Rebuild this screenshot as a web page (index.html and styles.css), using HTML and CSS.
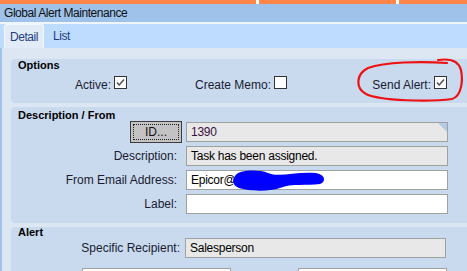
FILE: index.html
```html
<!DOCTYPE html>
<html lang="en">
<head>
  <meta charset="UTF-8" />
  <title>Global Alert Maintenance</title>
  <link rel="stylesheet" href="styles.css">
</head>
<body>
  <div class="topbar">
    <span class="seg seg-a"></span>
    <span class="seg seg-b"></span>
    <span class="seg seg-c"></span>
  </div>

  <div class="titlebar">Global Alert Maintenance</div>

  <div class="tabs">
    <span class="tab active">Detail</span>
    <span class="tab">List</span>
  </div>

  <div class="content">
    <section class="panel options">
      <div class="panel-title">Options</div>
      <div class="check-row">
        <div class="check first">Active:<svg class="box" width="13" height="13" viewBox="0 0 13 13"><rect x="0.5" y="0.5" width="12" height="12" fill="#fff" stroke="#333"/><path d="M3 6.5 L5.2 9 L10 3.5" fill="none" stroke="#4a4a4a" stroke-width="1.4"/></svg></div>
        <div class="check">Create Memo:<svg class="box" width="13" height="13" viewBox="0 0 13 13"><rect x="0.5" y="0.5" width="12" height="12" fill="#fff" stroke="#333"/></svg></div>
        <div class="check">Send Alert:<svg class="box" width="13" height="13" viewBox="0 0 13 13"><rect x="0.5" y="0.5" width="12" height="12" fill="#fff" stroke="#333"/><path d="M3 6.5 L5.2 9 L10 3.5" fill="none" stroke="#4a4a4a" stroke-width="1.4"/></svg></div>
      </div>
    </section>

    <section class="panel desc">
      <div class="panel-title">Description / From</div>
      <div class="form-row first">
        <div class="id-cell"><button class="id-btn"><span>ID...</span></button></div>
        <div class="field readonly keyed">1390</div>
      </div>
      <div class="form-row">
        <div class="label">Description:</div>
        <div class="field readonly">Task has been assigned.</div>
      </div>
      <div class="form-row">
        <div class="label">From Email Address:</div>
        <div class="field">Epicor@</div>
      </div>
      <div class="form-row">
        <div class="label">Label:</div>
        <div class="field"></div>
      </div>
    </section>

    <section class="panel alert">
      <div class="panel-title">Alert</div>
      <div class="form-row first">
        <div class="label narrow">Specific Recipient:</div>
        <div class="field readonly short">Salesperson</div>
      </div>
      <div class="pair">
        <div class="blank left"></div>
        <div class="blank right"></div>
      </div>
    </section>
  </div>

  <svg class="marks" width="467" height="271" viewBox="0 0 467 271">
    <path d="M235 176 C238 170 258 169 268 173 C280 178 296 171 316 173 C326 175 326 182 320 184 C306 186 292 183 280 188 C268 192 248 191 239 188 C232 185 232 180 235 176 Z" fill="#0000ff"/>
    <path d="M447 63 C420 61 385 62 368 68 C356 74 355 88 366 94 C380 101 430 102 452 99 C462 96 463 80 461 70 C459 62 452 58 438 60" fill="none" stroke="#ee1111" stroke-width="2.2" stroke-linecap="round"/>
  </svg>
</body>
</html>
```

FILE: styles.css
```css
* {
  margin: 0;
  padding: 0;
  box-sizing: border-box;
}

body {
  width: 467px;
  height: 271px;
  overflow: hidden;
  position: relative;
  background: #dde7f3;
  font-family: 'Liberation Sans', Arial, sans-serif;
  font-size: 12px;
  color: #1a1a30;
}

.topbar {
  display: flex;
  gap: 3px;
  height: 4px;
  background: #fff;
}

.seg {
  background: #ff8646;
}

.seg-a { width: 256px; }
.seg-b { width: 137px; }
.seg-c { flex: 1; }

.titlebar {
  height: 20px;
  line-height: 18px;
  padding-left: 4px;
  background: #9ec2ea;
  border-bottom: 2px solid #eef5fd;
  color: #111;
  letter-spacing: -0.45px;
}

.tabs {
  display: flex;
  gap: 3px;
  height: 24px;
  padding-left: 4px;
  background: #bedcff;
}

.tab {
  height: 24px;
  padding: 5px 6px 0;
  line-height: 14px;
  color: #1f3f7c;
  letter-spacing: -0.45px;
}

.tab.active {
  width: 40px;
  background: #e2ebf8;
  border: 1px solid #f4f8fd;
  border-bottom: none;
  border-radius: 3px 3px 0 0;
  padding-left: 5px;
}

.content {
  height: 223px;
  overflow: hidden;
  border-left: 2px solid #9ec2ea;
  padding: 11px 0 0 9px;
  display: flex;
  flex-direction: column;
  gap: 4px;
}

.panel {
  background: #c9daef;
  border-radius: 4px 0 0 4px;
  padding-left: 7px;
  flex: none;
}

.panel-title {
  font-size: 11px;
  font-weight: bold;
  line-height: 13px;
  color: #000;
}

.options {
  height: 44px;
}

.desc {
  height: 116px;
  padding-top: 2px;
}

.alert {
  flex: 1;
}

.alert .panel-title {
  line-height: 11px;
}

.check-row {
  display: flex;
  margin-top: 4px;
  line-height: 16px;
}

.check {
  width: 160px;
  text-align: right;
  flex: none;
}

.check.first {
  width: 109px;
}

.check .box {
  margin-left: 3px;
  vertical-align: baseline;
}

.form-row {
  display: flex;
  align-items: center;
  height: 20px;
  margin-top: 4px;
}

.form-row.first {
  margin-top: 0;
}

.label {
  width: 168px;
  flex: none;
  text-align: right;
  padding-right: 9px;
  white-space: nowrap;
}

.label.narrow {
  width: 167px;
  padding-right: 5px;
}

.id-cell {
  width: 168px;
  flex: none;
  display: flex;
  justify-content: flex-end;
  padding-right: 4px;
}

.id-btn {
  width: 52px;
  height: 22px;
  margin-top: -1px;
  padding: 2px;
  background: #c3c3c3;
  border: 1px solid #3c3c3c;
  font: 12px 'Liberation Sans', Arial, sans-serif;
  color: #111;
}

.id-btn span {
  display: block;
  height: 16px;
  line-height: 14px;
  border: 1px dotted #222;
}

.field {
  position: relative;
  width: 262px;
  height: 20px;
  flex: none;
  border: 1px solid #a0a0a0;
  background: #fff;
  padding-left: 4px;
  line-height: 18px;
  letter-spacing: -0.25px;
  color: #000;
  white-space: nowrap;
}

.field.readonly {
  background: #e8e8e8;
}

.field.short {
  width: 261px;
}

.field.keyed {
  color: #3a1040;
}

.field.keyed::after {
  content: "";
  position: absolute;
  top: 0;
  right: 0;
  border-top: 9px solid #b3cae6;
  border-left: 9px solid transparent;
}

.pair {
  display: flex;
  margin-top: 10px;
}

.blank {
  width: 149px;
  height: 20px;
  background: #fff;
  border: 1px solid #a0a0a0;
}

.blank.left { margin-left: 64px; }
.blank.right { margin-left: 67px; }

.marks {
  position: absolute;
  top: 0;
  left: 0;
  pointer-events: none;
}
```
